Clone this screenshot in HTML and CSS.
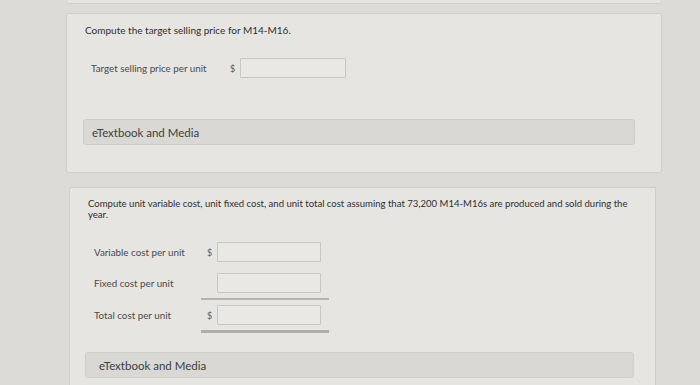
FILE: index.html
```html
<!DOCTYPE html>
<html lang="en">
<head>
  <meta charset="UTF-8" />
  <title>Target selling price</title>
  <link rel="stylesheet" href="styles.css">
</head>
<body>

<div class="page">
  <!-- конец предыдущего вопроса -->
  <div class="card card-prev"></div>

  <!-- Целевая цена -->
  <div class="card card-price">
    <p class="question">Compute the target selling price for M14-M16.</p>

    <div class="answer-row">
      <label class="answer-label">Target selling price per unit</label>
      <div class="amount">
        <span class="dollar">$</span>
        <input type="text" class="amount-input" />
      </div>
    </div>

    <div class="media-bar">eTextbook and Media</div>
  </div>

  <!-- Себестоимость единицы -->
  <div class="card card-cost">
    <p class="question">Compute unit variable cost, unit fixed cost, and unit total cost assuming that 73,200 M14-M16s are produced and sold during the year.</p>

    <div class="answer-row row-variable">
      <label class="answer-label">Variable cost per unit</label>
      <div class="amount">
        <span class="dollar">$</span>
        <input type="text" class="amount-input" />
      </div>
    </div>

    <div class="answer-row row-fixed">
      <label class="answer-label">Fixed cost per unit</label>
      <div class="amount underline">
        <span class="dollar"></span>
        <input type="text" class="amount-input" />
      </div>
    </div>

    <div class="answer-row row-total">
      <label class="answer-label">Total cost per unit</label>
      <div class="amount double-underline">
        <span class="dollar">$</span>
        <input type="text" class="amount-input" />
      </div>
    </div>

    <div class="media-bar">eTextbook and Media</div>
  </div>
</div>

</body>
</html>
```

FILE: styles.css
```css
body {
  margin: 0;
  background-color: #dddbd7;
  font-family: Lato, "Open Sans", Arial, sans-serif;
  color: #454545;
  height: 385px;
  overflow: hidden;
}
.page {
  padding-left: 66px;
  width: 596px;
}
.card {
  background-color: #e6e5e2;
  border: 1px solid #d0cecb;
  border-radius: 2px;
  box-sizing: border-box;
}
.card-prev {
  height: 4px;
  border-top: none;
}
.card-price {
  margin-top: 9px;
  height: 160px;
  padding: 11px 26px 0 18px;
}
.card-cost {
  margin: 14px 6px 0 3px;
  height: 210px;
  padding: 10px 18px 0 18px;
}
.question {
  margin: 0;
  line-height: 11px;
  color: #2f2f2f;
}
.card-price .question {
  font-size: 10px;
}
.card-cost .question {
  font-size: 9.55px;
}
.answer-row {
  display: flex;
  align-items: center;
  padding-left: 6px;
}
.answer-label {
  font-size: 9.8px;
  color: #4a4a4a;
}
.amount {
  display: flex;
  align-items: center;
}
.dollar {
  width: 10px;
  font-size: 9px;
  color: #5a5a5a;
}
.amount-input {
  margin: 0;
  padding: 0;
  height: 20px;
  box-sizing: border-box;
  background-color: #e9e8e5;
  border: 1px solid #c8c6c2;
  border-radius: 1px;
}
.media-bar {
  height: 26px;
  box-sizing: border-box;
  background-color: #d9d8d4;
  border: 1px solid #cfcdc9;
  border-radius: 3px;
  padding-left: 8px;
  display: flex;
  align-items: center;
  font-size: 11.5px;
  color: #3e3e3e;
}

/* первая карточка */
.card-price .answer-row {
  margin-top: 22px;
}
.card-price .answer-label {
  width: 139px;
}
.card-price .amount-input {
  width: 106px;
}
.card-price .media-bar {
  margin: 41px 0 0 -2px;
}

/* вторая карточка */
.card-cost .answer-label {
  width: 107px;
}
.card-cost .amount {
  width: 128px;
  padding: 0 8px 0 6px;
  box-sizing: border-box;
}
.card-cost .amount-input {
  width: 104px;
}
.row-variable {
  margin-top: 22px;
}
.row-fixed {
  margin-top: 11px;
  align-items: flex-start;
}
.row-fixed .answer-label {
  margin-top: 4px;
}
.card-cost .underline {
  padding-bottom: 5px;
  border-bottom: 2px solid #b5b3af;
}
.row-total {
  align-items: flex-start;
}
.row-total .answer-label {
  margin-top: 9px;
}
.card-cost .double-underline {
  padding-top: 5px;
  padding-bottom: 5px;
  border-bottom: 3px solid #b0aeaa;
}
.card-cost .media-bar {
  margin: 19px 0 0 -3px;
  padding-left: 13px;
  width: 549px;
}
```
